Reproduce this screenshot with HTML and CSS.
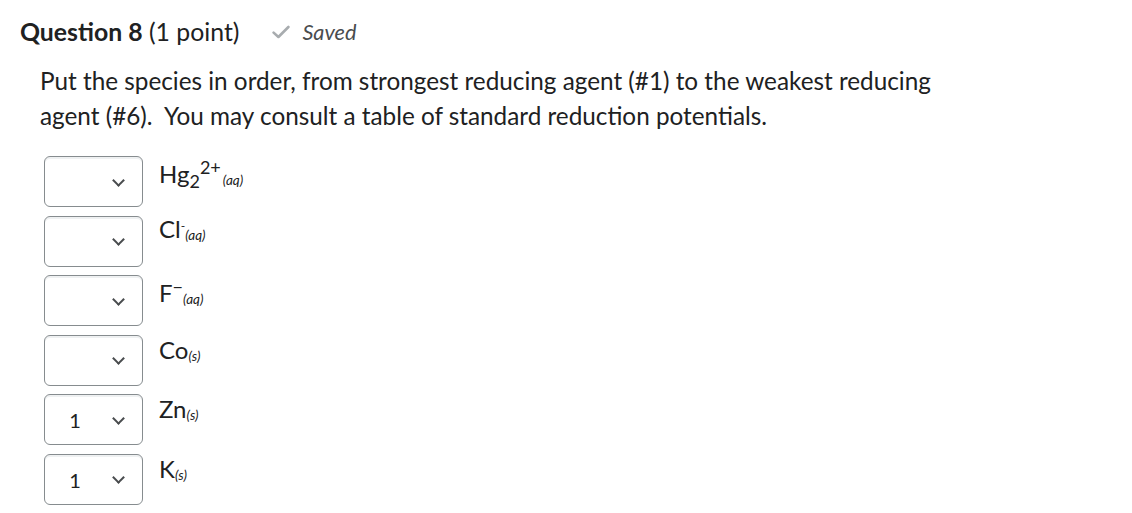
FILE: index.html
```html
<!DOCTYPE html>
<html>
<head>
<meta charset="utf-8">
<link rel="stylesheet" href="styles.css">
</head>
<body>
<div class="question">
  <div class="q-header">
    <h2 class="q-title"><strong>Question 8</strong> (1 point)</h2>
    <span class="saved">
      <svg class="check" width="18" height="14" viewBox="0 0 18 14"><path d="M1.6 7.6 L6.4 12 L16.4 2" fill="none" stroke="#a8acaf" stroke-width="2.6" stroke-linecap="round" stroke-linejoin="round"/></svg>
      <em>Saved</em>
    </span>
  </div>
  <p class="prompt">Put the species in order, from strongest reducing agent (#1) to the weakest reducing agent (#6).&nbsp; You may consult a table of standard reduction potentials.</p>
  <div class="choices">
    <div class="row">
      <div class="select"><span class="val"></span><span class="chev"></span></div>
      <div class="label raised">Hg<span class="sub2">2</span><span class="sup">2+</span><span class="state">(aq)</span></div>
    </div>
    <div class="row">
      <div class="select"><span class="val"></span><span class="chev"></span></div>
      <div class="label low">Cl<span class="supmini">-</span><span class="state">(aq)</span></div>
    </div>
    <div class="row">
      <div class="select"><span class="val"></span><span class="chev"></span></div>
      <div class="label raised">F<span class="supbar">−</span><span class="state">(aq)</span></div>
    </div>
    <div class="row">
      <div class="select"><span class="val"></span><span class="chev"></span></div>
      <div class="label">Co<span class="state">(s)</span></div>
    </div>
    <div class="row">
      <div class="select"><span class="val">1</span><span class="chev"></span></div>
      <div class="label">Zn<span class="state">(s)</span></div>
    </div>
    <div class="row">
      <div class="select"><span class="val">1</span><span class="chev"></span></div>
      <div class="label">K<span class="state">(s)</span></div>
    </div>
  </div>
</div>
</body>
</html>
```

FILE: styles.css
```css
* { box-sizing: border-box; }
body {
  margin: 0;
  background: #ffffff;
  font-family: Lato, "Noto Sans", sans-serif;
  color: #202122;
}
.question {
  padding: 16px 0 0 20px;
}
.q-header {
  display: flex;
  align-items: center;
  height: 32px;
}
.q-title {
  margin: 0;
  font-size: 24.8px;
  font-weight: 400;
  line-height: 32px;
}
.q-title strong { font-weight: 700; }
.saved {
  display: flex;
  align-items: center;
  margin-left: 33px;
  color: #494c4e;
  font-size: 21.7px;
}
.saved em { margin-left: 12px; }
.check { display: block; }
.prompt {
  margin: 15px 0 0 20px;
  font-size: 24.3px;
  line-height: 35px;
  width: 920px;
}
.choices {
  margin: 23px 0 0 24px;
  display: flex;
  flex-direction: column;
  gap: 8.6px;
}
.row {
  display: flex;
  align-items: flex-start;
}
.select {
  width: 99px;
  height: 51px;
  border: 1px solid #868c8f;
  border-radius: 6px;
  box-shadow: inset 0 2px 0 0 rgba(177, 185, 190, 0.2);
  display: flex;
  align-items: center;
  padding: 0 0 0 24px;
  flex: none;
}
.val {
  width: 12px;
  font-size: 20px;
  color: #202122;
  text-align: center;
  margin-top: 1px;
}
.chev {
  width: 9px;
  height: 9px;
  border-right: 2.4px solid #494c4e;
  border-bottom: 2.4px solid #494c4e;
  transform: rotate(45deg);
  margin-left: 33px;
  margin-top: -3px;
}
.label {
  margin-left: 16px;
  font-size: 24px;
  line-height: 30px;
  height: 30px;
  margin-top: 0;
  white-space: nowrap;
}
.label.raised { margin-top: 2.5px; }
.label.low { margin-top: -2px; }
.sub2 {
  font-size: 18px;
  position: relative;
  top: 5px;
}
.sup {
  font-size: 18px;
  position: relative;
  top: -9px;
  margin-right: 2px;
}
.supmini {
  font-size: 12px;
  position: relative;
  top: -8px;
}
.supbar {
  font-size: 18px;
  position: relative;
  top: -9px;
}
.state {
  font-size: 13.5px;
  font-style: italic;
  position: relative;
  top: 2px;
}
```
